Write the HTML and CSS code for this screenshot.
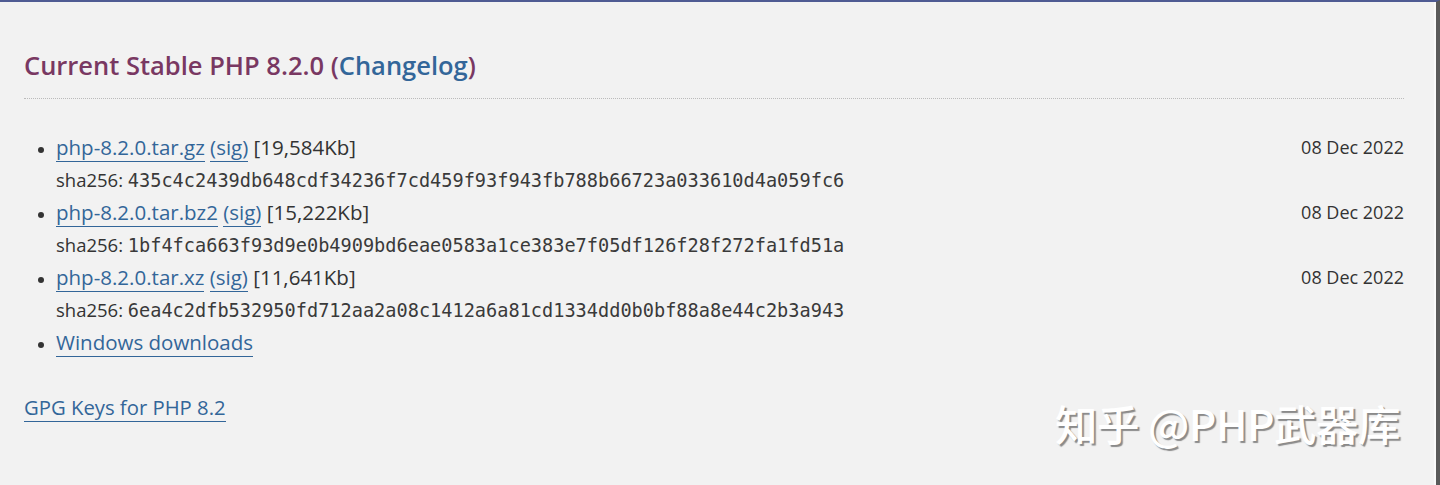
FILE: index.html
```html
<!DOCTYPE html>
<html>
<head>
<meta charset="utf-8">
<link rel="stylesheet" href="styles.css">
</head>
<body>
<div class="frame">
  <div class="content">
    <h3 class="title">Current Stable PHP 8.2.0 (<a href="#">Changelog</a>)</h3>
    <ul class="downloads">
      <li>
        <div class="row">
          <span><a href="#" class="lnk">php-8.2.0.tar.gz</a> <a href="#" class="lnk">(sig)</a> <span class="size">[19,584Kb]</span></span>
          <span class="date">08 Dec 2022</span>
        </div>
        <div class="sha">sha256: <span class="hash">435c4c2439db648cdf34236f7cd459f93f943fb788b66723a033610d4a059fc6</span></div>
      </li>
      <li>
        <div class="row">
          <span><a href="#" class="lnk">php-8.2.0.tar.bz2</a> <a href="#" class="lnk">(sig)</a> <span class="size">[15,222Kb]</span></span>
          <span class="date">08 Dec 2022</span>
        </div>
        <div class="sha">sha256: <span class="hash">1bf4fca663f93d9e0b4909bd6eae0583a1ce383e7f05df126f28f272fa1fd51a</span></div>
      </li>
      <li>
        <div class="row">
          <span><a href="#" class="lnk">php-8.2.0.tar.xz</a> <a href="#" class="lnk">(sig)</a> <span class="size">[11,641Kb]</span></span>
          <span class="date">08 Dec 2022</span>
        </div>
        <div class="sha">sha256: <span class="hash">6ea4c2dfb532950fd712aa2a08c1412a6a81cd1334dd0b0bf88a8e44c2b3a943</span></div>
      </li>
      <li>
        <div class="row">
          <span><a href="#" class="lnk">Windows downloads</a></span>
        </div>
      </li>
    </ul>
    <div class="gpg"><a href="#" class="lnk">GPG Keys for PHP 8.2</a></div>
  </div>
  <div class="watermark">知乎 @PHP武器库</div>
</div>
</body>
</html>
```
FILE: styles.css
```css
html, body {
  margin: 0;
  padding: 0;
  background: #f2f2f2;
}
.frame {
  position: relative;
  width: 1440px;
  height: 485px;
  box-sizing: border-box;
  border-top: 2px solid #4f5b93;
  border-right: 4px solid #5a5a5a;
  background: #f2f2f2;
  overflow: hidden;
  font-family: "Open Sans", "Noto Sans", sans-serif;
  color: #333;
}
.frame::after {
  content: "";
  position: absolute;
  right: 0;
  top: 0;
  bottom: 0;
  width: 2px;
  background: #fafafa;
}
.content {
  padding: 0 32px 0 24px;
}
.title {
  margin: 0;
  padding-top: 46px;
  padding-bottom: 16px;
  font-size: 25.5px;
  line-height: 34px;
  font-weight: 600;
  color: #793862;
  border-bottom: 1px dotted #bbb;
}
.title a {
  color: #336699;
  text-decoration: none;
}
.downloads {
  margin: 0;
  padding: 32px 0 0 32px;
  list-style: disc;
}
.downloads li {
  font-size: 20.5px;
  line-height: 32.5px;
}
.downloads li::marker {
  font-size: 16px;
}
.row {
  display: flex;
  justify-content: space-between;
  align-items: baseline;
  height: 32.5px;
}
.lnk {
  color: #336699;
  text-decoration: none;
  border-bottom: 1px solid #336699;
}
.size {
  color: #333;
}
.date {
  font-size: 18px;
  color: #333;
  position: relative;
  top: -1px;
}
.sha {
  font-size: 18.5px;
  height: 32.5px;
  line-height: 32.5px;
}
.hash {
  font-family: "DejaVu Sans Mono", monospace;
  font-size: 18.6px;
  line-height: 1;
  color: #3a3a3a;
}
.gpg {
  margin-top: 32px;
  font-size: 20.3px;
  line-height: 32px;
}
.watermark {
  position: absolute;
  left: 1055px;
  top: 395px;
  font-family: "Noto Sans CJK SC", sans-serif;
  font-size: 42.5px;
  line-height: 52px;
  font-weight: 500;
  color: #fff;
  text-shadow: 2px 2px 1px #8a8a8a;
  letter-spacing: -0.5px;
}
```
